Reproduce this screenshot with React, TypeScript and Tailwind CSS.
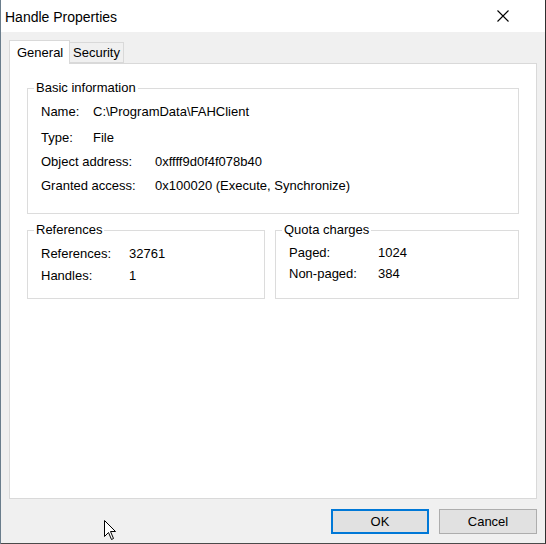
import React from "react";

type Row = { label: string; value: string };

const basicRows: Array<Row & { w: string; mt: string }> = [
    { label: "Name:", value: "C:\\ProgramData\\FAHClient", w: "w-[52px]", mt: "mt-[8px]" },
    { label: "Type:", value: "File", w: "w-[52px]", mt: "mt-[10px]" },
    { label: "Object address:", value: "0xffff9d0f4f078b40", w: "w-[114px]", mt: "mt-[8px]" },
    { label: "Granted access:", value: "0x100020 (Execute, Synchronize)", w: "w-[114px]", mt: "mt-[8px]" },
];

function GroupBox({ title, className, children }: { title: string; className: string; children: React.ReactNode }) {
    return (
        <fieldset className={`border border-[#dcdcdc] ${className}`}>
            <legend className="ml-[6px] px-[2px] leading-[16px]">{title}</legend>
            <div className="pl-[13px]">{children}</div>
        </fieldset>
    );
}

function Cursor() {
    return (
        <svg className="absolute left-[103px] top-[519px]" width="14" height="22" viewBox="0 0 14 22">
            <path d="M1.5 1.5 L1.5 17.5 L5.5 13.5 L8.5 20.5 L10.5 19.5 L7.5 12.5 L12.5 12.5 Z" fill="#fff" stroke="#000" strokeWidth="1" />
        </svg>
    );
}

export default function App() {
    return (
        <div className="relative w-[546px] h-[544px] flex bg-[#56697a] text-[13px] text-black" style={{ fontFamily: '"Liberation Sans", Arial, sans-serif' }}>
            <div className="w-px bg-[#6a7d8c]" />
            <div className="flex-1 flex flex-col bg-[#f0f0f0] border-r border-b border-r-[#2f2f2f] border-b-[#4a4a4a]">
                {/* title bar */}
                <div className="h-[32px] bg-white flex items-center justify-between pl-[4px]">
                    <span className="text-[14px] text-[#000] pt-[2px]">Handle Properties</span>
                    <svg className="mr-[36px]" width="12" height="12" viewBox="0 0 12 12">
                        <path d="M0.5 0.5 L11.5 11.5 M11.5 0.5 L0.5 11.5" stroke="#000" strokeWidth="1.1" />
                    </svg>
                </div>

                <div className="flex flex-col pl-[8px] pt-[8px]">
                    {/* tabs */}
                    <div className="flex items-end h-[23px]">
                        <div className="relative z-10 -mb-px h-[24px] w-[61px] bg-white border border-b-0 border-[#d9d9d9] flex items-center pl-[7px]">
                            General
                        </div>
                        <div className="h-[21px] w-[54px] bg-[#f0f0f0] border border-l-0 border-[#d9d9d9] flex items-center pl-[3px]">
                            Security
                        </div>
                    </div>

                    {/* panel */}
                    <div className="w-[528px] h-[436px] bg-white border border-[#d9d9d9] pl-[17px] pt-[16px]">
                        <GroupBox title="Basic information" className="w-[492px] h-[134px]">
                            {basicRows.map((r) => (
                                <div key={r.label} className={`flex leading-[16px] ${r.mt}`}>
                                    <span className={r.w}>{r.label}</span>
                                    <span>{r.value}</span>
                                </div>
                            ))}
                        </GroupBox>

                        <div className="flex gap-[10px] mt-[8px]">
                            <GroupBox title="References" className="w-[238px] h-[77px]">
                                <div className="flex leading-[16px] mt-[8px]">
                                    <span className="w-[88px]">References:</span>
                                    <span>32761</span>
                                </div>
                                <div className="flex leading-[16px] mt-[6px]">
                                    <span className="w-[88px]">Handles:</span>
                                    <span>1</span>
                                </div>
                            </GroupBox>
                            <GroupBox title="Quota charges" className="w-[244px] h-[77px]">
                                <div className="flex leading-[16px] mt-[7px]">
                                    <span className="w-[89px]">Paged:</span>
                                    <span>1024</span>
                                </div>
                                <div className="flex leading-[16px] mt-[5px]">
                                    <span className="w-[89px]">Non-paged:</span>
                                    <span>384</span>
                                </div>
                            </GroupBox>
                        </div>
                    </div>

                    {/* buttons */}
                    <div className="flex justify-end gap-[10px] mt-[10px] w-[528px]">
                        <button type="button" className="w-[98px] h-[25px] bg-[#e1e1e1] border-2 border-[#0078d7]">OK</button>
                        <button type="button" className="w-[98px] h-[25px] bg-[#e1e1e1] border border-[#adadad]">Cancel</button>
                    </div>
                </div>
            </div>
            <Cursor />
        </div>
    );
}
